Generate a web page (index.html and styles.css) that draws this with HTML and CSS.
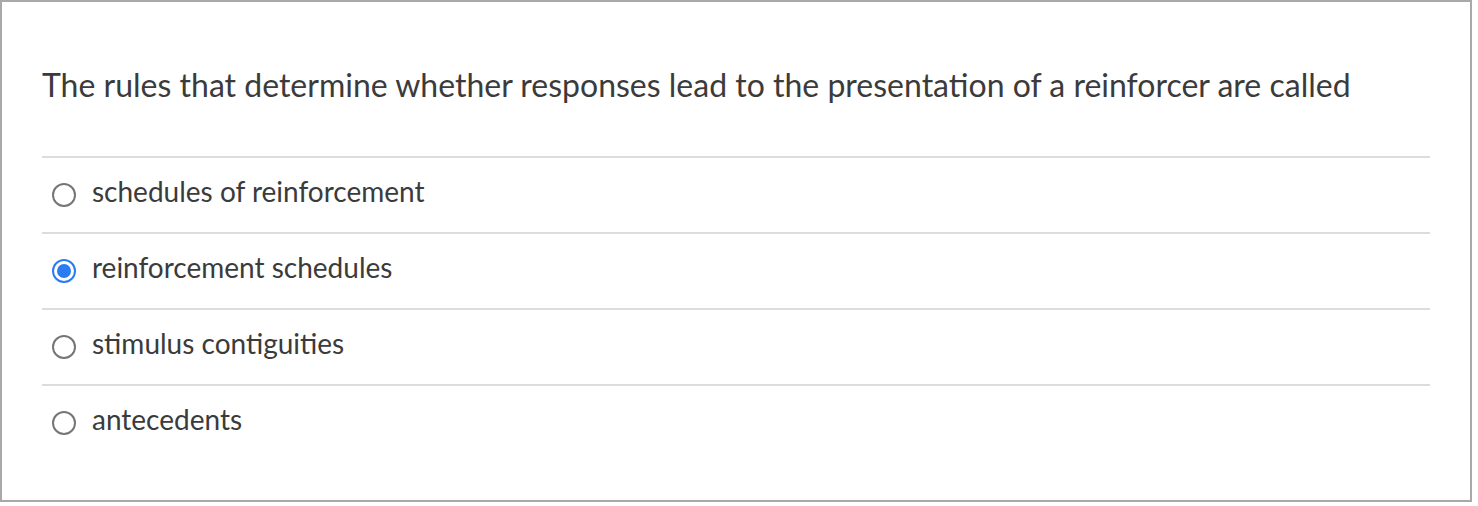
FILE: index.html
```html
<!DOCTYPE html>
<html lang="en">
<head>
<meta charset="utf-8">
<title>Quiz question</title>
<link rel="stylesheet" href="styles.css">
</head>
<body>
<div class="question">
  <p class="prompt">The rules that determine whether responses lead to the presentation of a reinforcer are called</p>
  <ul class="answers">
    <li class="answer"><span class="radio"></span><span class="label">schedules of reinforcement</span></li>
    <li class="answer"><span class="radio checked"></span><span class="label">reinforcement schedules</span></li>
    <li class="answer"><span class="radio"></span><span class="label">stimulus contiguities</span></li>
    <li class="answer"><span class="radio"></span><span class="label">antecedents</span></li>
  </ul>
</div>
</body>
</html>
```
FILE: styles.css
```css
html, body {
  margin: 0;
  padding: 0;
  background: #fff;
}
body {
  font-family: Lato, "Open Sans", sans-serif;
  color: #3b3b3b;
}
.question {
  width: 1472px;
  height: 502px;
  box-sizing: border-box;
  border: 2px solid #a9a9a9;
  padding: 63px 40px 0;
}
.prompt {
  margin: 0 0 51px;
  font-size: 32px;
  line-height: 40px;
}
.answers {
  list-style: none;
  margin: 0;
  padding: 0;
}
.answer {
  display: flex;
  align-items: center;
  height: 76px;
  box-sizing: border-box;
  border-top: 2px solid #dcdcdc;
  padding-left: 10px;
  font-size: 28px;
}
.label {
  margin-bottom: 9px;
}
.radio {
  width: 24px;
  height: 24px;
  box-sizing: border-box;
  border: 2px solid #767676;
  border-radius: 50%;
  margin-right: 16px;
  flex: none;
  position: relative;
}
.radio.checked {
  border: 2.5px solid #2a7cf0;
}
.radio.checked::after {
  content: "";
  position: absolute;
  left: 2.5px;
  top: 2.5px;
  width: 14px;
  height: 14px;
  border-radius: 50%;
  background: #2a7cf0;
}
```
